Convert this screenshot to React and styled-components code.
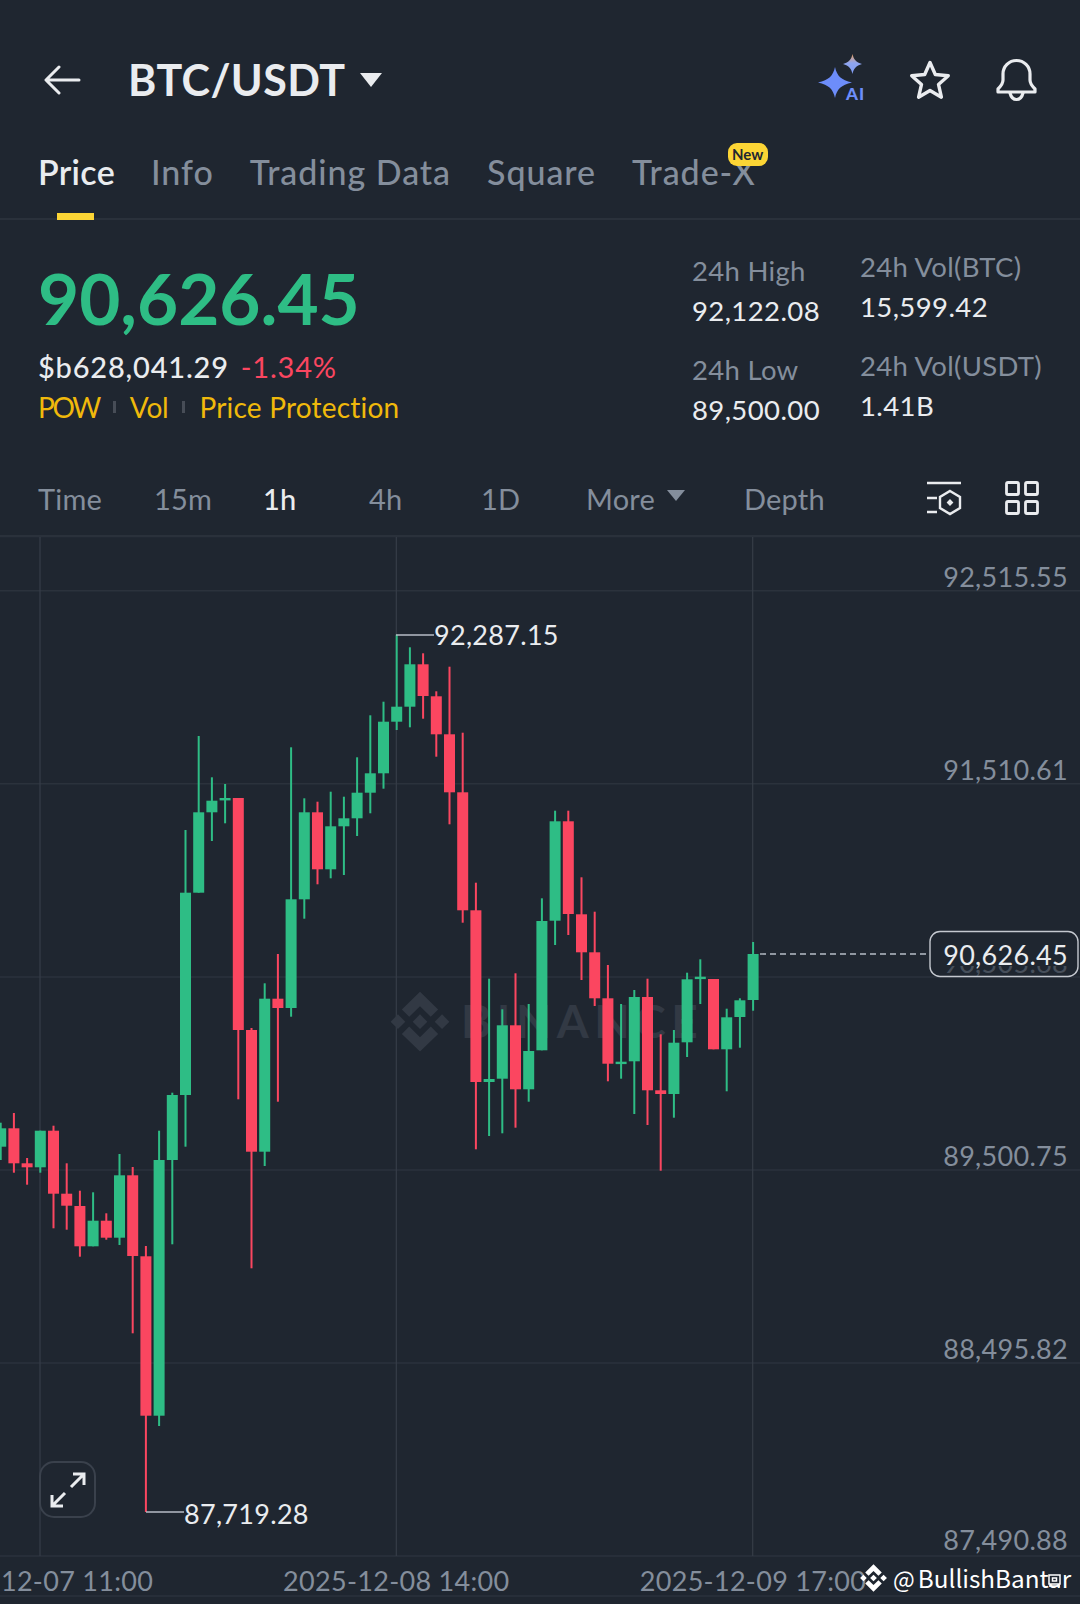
import React from "react";
import styled, { createGlobalStyle } from "styled-components";

const GlobalStyle = createGlobalStyle`
  html, body { margin: 0; padding: 0; background: #1f2630; }
  * { box-sizing: border-box; }
`;

const FONT = `Lato, "Noto Sans", Arial, sans-serif`;
const BG = "#1f2630";
const GREEN = "#2ebd85";
const RED = "#fb4660";
const YELLOW = "#f0b90b";
const MUTED = "#848e9c";
const LIGHT = "#eaecef";

const Page = styled.div`
  width: 1080px;
  height: 1604px;
  background: ${BG};
  font-family: ${FONT};
  display: flex;
  flex-direction: column;
  overflow: hidden;
  position: relative;
`;

const Header = styled.header`
  height: 144px;
  padding: 16px 43px 0 44px;
  display: flex;
  align-items: center;
`;
const BackIcon = styled.svg`
  width: 37px;
  height: 30px;
  flex: none;
`;
const Title = styled.h1`
  margin: 0 0 0 47px;
  font-size: 43px;
  line-height: 50px;
  font-weight: 700;
  color: ${LIGHT};
  letter-spacing: 0.4px;
`;
const Caret = styled.span`
  width: 0;
  height: 0;
  margin-left: 15px;
  border-left: 11px solid transparent;
  border-right: 11px solid transparent;
  border-top: 14px solid ${LIGHT};
`;
const HeaderIcons = styled.div`
  margin-left: auto;
  display: flex;
  align-items: center;
  gap: 43px;
`;
const HeaderIcon = styled.svg`
  display: block;
  flex: none;
  margin-left: ${(p) => p.$shift || 0}px;
`;

const Tabs = styled.nav`
  height: 76px;
  padding-left: 38px;
  display: flex;
  gap: 36px;
  border-bottom: 2px solid #2a313b;
`;
const Tab = styled.div`
  position: relative;
  height: 76px;
  padding-top: 6px;
  font-size: 34px;
  line-height: 44px;
  letter-spacing: ${(p) => (p.$active ? 0.3 : 0.95)}px;
  font-weight: ${(p) => (p.$active ? 600 : 500)};
  color: ${(p) => (p.$active ? LIGHT : MUTED)};
  ${(p) =>
    p.$active &&
    `&::after {
      content: "";
      position: absolute;
      left: 19px;
      bottom: 0;
      width: 37px;
      height: 7px;
      background: #fcd535;
    }`}
`;
const NewBadge = styled.span`
  position: absolute;
  right: -12px;
  top: -1px;
  width: 40px;
  height: 23px;
  border-radius: 9px;
  background: #fcd535;
  color: #1f2630;
  font-size: 15px;
  line-height: 23px;
  letter-spacing: 0;
  font-weight: 700;
  text-align: center;
`;

const Quote = styled.section`
  height: 242px;
  padding-left: 38px;
  display: flex;
  flex: none;
`;
const QuoteLeft = styled.div`
  width: 654px;
  padding-top: 39px;
`;
const BigPrice = styled.div`
  font-size: 71px;
  line-height: 78px;
  font-weight: 700;
  color: ${GREEN};
`;
const FiatRow = styled.div`
  margin-top: 12px;
  display: flex;
  gap: 12px;
  font-size: 29px;
  line-height: 36px;
  letter-spacing: 0.8px;
`;
const Fiat = styled.span`
  color: ${LIGHT};
  font-weight: 500;
`;
const Change = styled.span`
  color: ${RED};
`;
const TagRow = styled.div`
  margin-top: 5px;
  display: flex;
  align-items: center;
  font-size: 28px;
  line-height: 34px;
  color: ${YELLOW};
`;
const Tag = styled.span`
  letter-spacing: ${(p) => p.$spacing}px;
`;
const TagSep = styled.i`
  width: 3px;
  height: 12px;
  margin: 0 14px;
  background: #474d57;
`;
const StatColumn = styled.div`
  width: ${(p) => p.$w}px;
  padding-top: ${(p) => p.$top}px;
  display: flex;
  flex-direction: column;
  gap: 24px;
`;
const Stat = styled.div`
  display: flex;
  flex-direction: column;
  gap: 5px;
`;
const StatLabel = styled.div`
  font-size: 27.5px;
  line-height: 35px;
  letter-spacing: 0.3px;
  color: ${MUTED};
`;
const StatValue = styled.div`
  font-size: 27.5px;
  line-height: 35px;
  color: ${LIGHT};
  letter-spacing: 0.4px;
`;

const Intervals = styled.div`
  height: 75px;
  padding-left: 38px;
  display: flex;
  flex: none;
  align-items: center;
  border-bottom: 2px solid #2a313b;
`;
const Interval = styled.div`
  width: ${(p) => p.$w}px;
  flex: none;
  font-size: 29px;
  line-height: 40px;
  letter-spacing: 0.2px;
  font-weight: ${(p) => (p.$active ? 500 : 400)};
  color: ${(p) => (p.$active ? LIGHT : MUTED)};
  display: flex;
  align-items: center;
  gap: 12px;
`;
const MoreCaret = styled.span`
  width: 0;
  height: 0;
  margin-top: -6px;
  border-left: 9px solid transparent;
  border-right: 9px solid transparent;
  border-top: 11px solid ${MUTED};
`;
const ToolIcons = styled.div`
  margin-left: auto;
  margin-right: 41px;
  display: flex;
  gap: 43px;
`;

const Chart = styled.div`
  position: relative;
  flex: 1;
  min-height: 0;
`;
const ChartSvg = styled.svg`
  display: block;
  width: 1080px;
  height: 1067px;
  font-family: ${FONT};
`;
const ExpandButton = styled.div`
  position: absolute;
  left: 39px;
  top: 924px;
  width: 57px;
  height: 57px;
  border: 2px solid #3a414c;
  border-radius: 15px;
  display: flex;
  align-items: center;
  justify-content: center;
`;
const Credit = styled.div`
  position: absolute;
  left: 860px;
  bottom: 10px;
  display: flex;
  align-items: center;
  color: #fff;
  font-family: "Noto Sans CJK SC", "Noto Sans", sans-serif;
  font-size: 24.3px;
  line-height: 32px;
`;
const CreditName = styled.span`
  position: relative;
  margin-left: 3px;
`;
const CreditAt = styled.span`
  margin-left: 6px;
  font-size: 23px;
`;
const CreditMark = styled.svg`
  position: absolute;
  right: 10px;
  top: 12px;
`;

// [colour, wick top, body top, body bottom, wick bottom]
const candles = [
  ["g",1122.7,1128.3,1146.7,1160],["r",1113,1128.3,1163.3,1172.7],["r",1158,1163.3,1167.3,1184.7],
  ["g",1130.7,1130.7,1167.3,1172.7],["r",1125.7,1130.7,1193.7,1228.3],["r",1163.3,1193.7,1205.7,1229.7],
  ["r",1190.7,1206,1246.3,1256.7],["g",1192.3,1220.7,1246.3,1246.3],["r",1213.3,1220.7,1237.7,1239.7],
  ["g",1154,1175.3,1237.7,1245],["r",1167,1175.3,1256,1333.3],["r",1246,1256.3,1415.7,1512],
  ["g",1130.7,1160,1415.7,1426],["g",1092.7,1095,1160,1244.3],["g",830,892.7,1095,1146.7],
  ["g",736,812.3,892.7,892.7],["g",777.3,800.7,812.3,841],["g",784,798,800.3,823.3],
  ["r",798,798,1030,1099.3],["r",1028,1030,1151.7,1268.3],["g",983.3,998.7,1151.7,1166],
  ["r",954,998.7,1008,1101.7],["g",747.3,899.3,1008,1016.7],["g",798.3,812.3,899.3,918.7],
  ["r",801.7,812.3,869.3,884.3],["g",791.7,826.3,869.3,878.3],["g",796.7,818.3,826.3,875],
  ["g",757.3,792.7,818.3,836],["g",715.3,773.3,792.7,813.3],["g",701.7,721.7,773.3,788.7],
  ["g",634.7,706.7,721.7,730],["g",647.3,664.3,706.7,727.3],["r",653.3,664.3,696,718.7],
  ["r",691.3,696.3,734.3,756.7],["r",666.7,734.3,792.3,824.3],["r",732.7,792.3,910.3,922.7],
  ["r",882.7,910.3,1082,1149.3],["g",978.7,1079,1082,1136],["g",1009.3,1025.3,1078.7,1133.3],
  ["r",973.3,1025.3,1089.3,1127.7],["g",1004,1051,1089.3,1101.7],["g",898.3,921,1050.3,1050.3],
  ["g",810.7,821.3,920.7,945],["r",810.7,821.3,914,935],["r",877.3,914.3,952.3,980],
  ["r",911.7,952.3,998.3,1006],["r",965,998.3,1063.7,1081.3],["g",1004,1061.7,1064,1078.7],
  ["g",990,997,1061.3,1114],["r",978.7,997,1090.3,1125],["r",1034.3,1090.3,1094,1170.7],
  ["g",1030,1042.7,1094,1117.7],["g",972.7,979.3,1042.3,1057],["g",959.3,976.7,979,1004],
  ["r",979,979,1049.3,1049.3],["g",1008.7,1017.3,1049.3,1091.3],["g",998.3,1000.3,1017,1047.7],
  ["g",942,954,1000,1010.7],
];

const gridY = [536.6, 590.7, 783.7, 977, 1170, 1363, 1556, 1596];
const gridX = [40, 396.3, 752.7];
const axis = [
  ["92,515.55", 587], ["91,510.61", 780], ["89,500.75", 1166], ["88,495.82", 1359], ["87,490.88", 1550],
];
const times = [["2025-12-07 11:00", 40], ["2025-12-08 14:00", 396.3], ["2025-12-09 17:00", 753]];

function BinanceMark({ x, y, scale, fill }) {
  return (
    <g transform={`translate(${x} ${y}) scale(${scale})`} fill={fill}>
      <path d="M-7.4-5 0-12.2 7.4-5 4.4-2 0-6.3-4.4-2Z" />
      <path d="M-7.4 5 0 12.2 7.4 5 4.4 2 0 6.3-4.4 2Z" />
      <path d="M0-3 3 0 0 3-3 0Z" />
      <path d="M-9-3-6 0-9 3-12 0Z" />
      <path d="M9-3 12 0 9 3 6 0Z" />
    </g>
  );
}

function CandleChart() {
  return (
    <ChartSvg viewBox="0 537 1080 1067">
      <defs>
        <clipPath id="ghost">
          <rect x="930" y="966" width="148" height="10" />
        </clipPath>
      </defs>
      <g stroke="#2b323c" strokeWidth="1.5">
        {gridY.map((y) => <line key={y} x1="0" x2="1080" y1={y} y2={y} />)}
      </g>
      <g stroke="#363d48" strokeWidth="1.2">
        {gridX.map((x) => <line key={x} x1={x} x2={x} y1="537" y2="1556" />)}
      </g>
      <BinanceMark x={420} y={1021.7} scale={2.45} fill="#323944" />
      <text x="461" y="1038" fontSize="46" fontWeight="700" letterSpacing="5.5" fill="#323944">BINANCE</text>
      {candles.map(([c, wt, bt, bb, wb], i) => {
        const x = 0.7 + 13.2 * i;
        const color = c === "g" ? GREEN : RED;
        return (
          <g key={i} fill={color}>
            <rect x={x - 1} y={wt} width="2" height={wb - wt} />
            <rect x={x - 5.5} y={bt} width="11" height={Math.max(bb - bt, 2.4)} />
          </g>
        );
      })}
      <line x1="396" x2="434" y1="635" y2="635" stroke="#b7bdc6" strokeWidth="1.4" />
      <text x="434" y="645" fontSize="27" fill={LIGHT} letterSpacing="0.3">92,287.15</text>
      <line x1="146" x2="184" y1="1512" y2="1512" stroke="#b7bdc6" strokeWidth="1.4" />
      <text x="184" y="1524" fontSize="27" fill={LIGHT} letterSpacing="0.3">87,719.28</text>
      {axis.map(([label, y]) => (
        <text key={label} x="1068" y={y} fontSize="27" fill={MUTED} textAnchor="end" letterSpacing="0.3">{label}</text>
      ))}
      {times.map(([label, x]) => (
        <text key={label} x={x} y="1591" fontSize="27" fill={MUTED} textAnchor="middle" letterSpacing="0.3">{label}</text>
      ))}
      <line x1="760" x2="930" y1="954" y2="954" stroke="#b7bdc6" strokeWidth="1.4" strokeDasharray="6 4" />
      <rect x="930" y="931.5" width="148" height="45" rx="10" fill={BG} stroke="#c4c8cf" strokeWidth="1.4" />
      <text x="1068" y="973" fontSize="27" fill={MUTED} opacity="0.4" textAnchor="end" letterSpacing="0.3" clipPath="url(#ghost)">90,505.68</text>
      <text x="1068" y="965" fontSize="27" fill={LIGHT} textAnchor="end" letterSpacing="0.3">90,626.45</text>
    </ChartSvg>
  );
}

export default function App() {
  return (
    <Page>
      <GlobalStyle />
      <Header>
        <BackIcon viewBox="0 0 37 30" fill="none" stroke="#eaecef" strokeWidth="3" strokeLinecap="round" strokeLinejoin="round">
          <path d="M35 15H3M15 2 2 15l13 13" />
        </BackIcon>
        <Title>BTC/USDT</Title>
        <Caret />
        <HeaderIcons>
          <HeaderIcon width="50" height="52" viewBox="0 0 50 52">
            <defs>
              <linearGradient id="sparkle" x1="0" y1="0" x2="0" y2="1">
                <stop offset="0" stopColor="#e8a060" />
                <stop offset="0.45" stopColor="#8fa5f0" />
                <stop offset="1" stopColor="#7f9cf5" />
              </linearGradient>
            </defs>
            <path d="M17 13C19 22 23 26 34 28.500 23 31 19 35 17 44 15 35 11 31 0 28.500 11 26 15 22 17 13Z" fill="#6d8dfa" />
            <path d="M34.500 0C35.500 5 38 8.500 44 10 38 11.500 35.500 15 34.500 20 33.500 15 31 11.500 25 10 31 8.500 33.500 5 34.500 0Z" fill="url(#sparkle)" />
            <text x="28" y="46" fontSize="17" fontWeight="900" fill="#6d8dfa" letterSpacing="1">AI</text>
          </HeaderIcon>
          <HeaderIcon $shift={-2} width="42" height="42" viewBox="0 0 42 42" fill="none" stroke="#eaecef" strokeWidth="3.4" strokeLinejoin="round">
            <path d="M21 3.500 26.300 15.500 39.300 16.700 29.500 25.400 32.400 38.200 21 31.500 9.600 38.200 12.500 25.400 2.700 16.700 15.700 15.500Z" />
          </HeaderIcon>
          <HeaderIcon $shift={2} width="41" height="44" viewBox="0 0 41 44" fill="none" stroke="#eaecef" strokeWidth="3.2" strokeLinejoin="round" strokeLinecap="round">
            <path d="M7 22V16a13.500 13.500 0 0 1 27 0v6c0 4 2 6 5 9v3H2v-3c3-3 5-5 5-9Z" />
            <path d="M14 35c1 4 3.500 6.500 6.500 6.500S26 39 27 35" />
          </HeaderIcon>
        </HeaderIcons>
      </Header>

      <Tabs>
        <Tab $active>Price</Tab>
        <Tab>Info</Tab>
        <Tab>Trading Data</Tab>
        <Tab>Square</Tab>
        <Tab>Trade-X<NewBadge>New</NewBadge></Tab>
      </Tabs>

      <Quote>
        <QuoteLeft>
          <BigPrice>90,626.45</BigPrice>
          <FiatRow>
            <Fiat>$b628,041.29</Fiat>
            <Change>-1.34%</Change>
          </FiatRow>
          <TagRow>
            <Tag $spacing={-2.4}>POW</Tag><TagSep /><Tag $spacing={-0.2}>Vol</Tag><TagSep /><Tag $spacing={0.2}>Price Protection</Tag>
          </TagRow>
        </QuoteLeft>
        <StatColumn $w={168} $top={33}>
          <Stat><StatLabel>24h High</StatLabel><StatValue>92,122.08</StatValue></Stat>
          <Stat><StatLabel>24h Low</StatLabel><StatValue>89,500.00</StatValue></Stat>
        </StatColumn>
        <StatColumn $w={210} $top={29}>
          <Stat><StatLabel>24h Vol(BTC)</StatLabel><StatValue>15,599.42</StatValue></Stat>
          <Stat><StatLabel>24h Vol(USDT)</StatLabel><StatValue>1.41B</StatValue></Stat>
        </StatColumn>
      </Quote>

      <Intervals>
        <Interval $w={116}>Time</Interval>
        <Interval $w={109}>15m</Interval>
        <Interval $w={106} $active>1h</Interval>
        <Interval $w={112}>4h</Interval>
        <Interval $w={105}>1D</Interval>
        <Interval $w={158}>More<MoreCaret /></Interval>
        <Interval $w={100}>Depth</Interval>
        <ToolIcons>
          <svg width="36" height="36" viewBox="0 0 36 36" fill="none" stroke="#eaecef" strokeWidth="2.400">
            <path d="M1 2h34M1 17h10M1 31h10" />
            <path d="M24 10l10 6v11l-10 6-10-6V16Z" />
            <path d="M24 18l3.400 3.400L24 25l-3.400-3.600Z" fill="#eaecef" stroke="none" />
          </svg>
          <svg width="34" height="34" viewBox="0 0 34 34" fill="none" stroke="#eaecef" strokeWidth="2.800" strokeLinejoin="round">
            <rect x="1.500" y="1.500" width="12" height="12" rx="1.500" />
            <rect x="20.500" y="1.500" width="12" height="12" rx="1.500" />
            <rect x="1.500" y="20.500" width="12" height="12" rx="1.500" />
            <rect x="20.500" y="20.500" width="12" height="12" rx="1.500" />
          </svg>
        </ToolIcons>
      </Intervals>

      <Chart>
        <CandleChart />
        <ExpandButton>
          <svg width="38" height="38" viewBox="0 0 38 38" fill="none" stroke="#eaecef" strokeWidth="3">
            <path d="M22 16 35 3M24 3h11v11M16 22 3 35M14 35H3V24" />
          </svg>
        </ExpandButton>
        <Credit>
          <svg width="27" height="28" viewBox="0 0 27 28"><BinanceMark x={13.500} y={14} scale={1.12} fill="#fff" /></svg>
          <CreditAt>@</CreditAt>
          <CreditName>
            BullishBantar
            <CreditMark width="13" height="13" viewBox="0 0 13 13" fill={BG} stroke="#fff" strokeWidth="1.500">
              <rect x="1" y="1" width="11" height="9" />
              <rect x="4.500" y="4" width="4" height="3" />
              <path d="M1 12h11" />
            </CreditMark>
          </CreditName>
        </Credit>
      </Chart>
    </Page>
  );
}
